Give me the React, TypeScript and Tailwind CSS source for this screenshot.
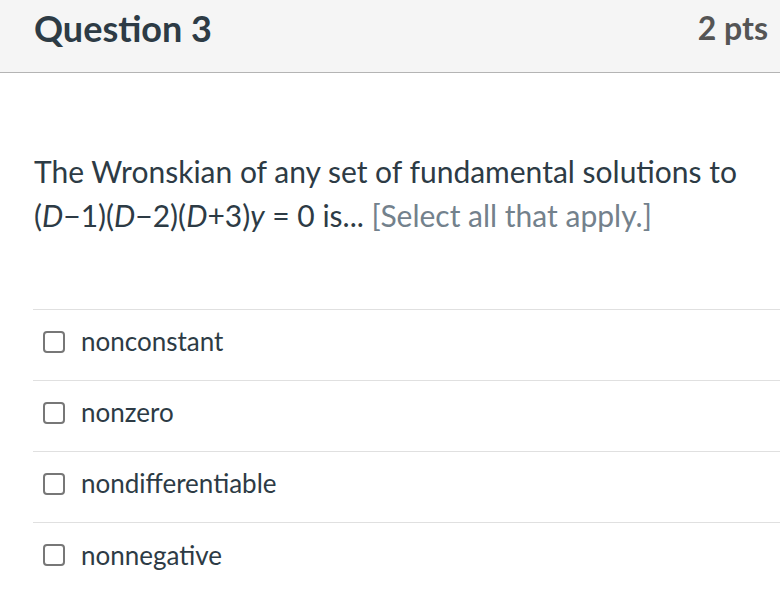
const answers = ['nonconstant', 'nonzero', 'nondifferentiable', 'nonnegative'];

export default function App() {
  return (
    <div className="w-[780px] h-[605px] overflow-hidden bg-white font-['Lato',sans-serif] text-[#2d3b45]">
      <div className="h-[73px] bg-[#f5f5f5] border-b border-[#b4b4b4] flex items-start justify-between pl-[34px] pr-[12px] pt-[8px]">
        <h2 className="text-[36px] font-bold leading-[40px]">Question 3</h2>
        <span className="text-[32px] font-bold leading-[40px] text-[#555555]">2 pts</span>
      </div>

      <div className="pl-[34px] pt-[76px]">
        <p className="text-[30px] leading-[44px]">
          The Wronskian of any set of fundamental solutions to
          <br />
          (<i>D</i>−1)(<i>D</i>−2)(<i>D</i>+3)<i>y</i> = 0 is... <span className="text-[#73818c]">[Select all that apply.]</span>
        </p>
      </div>

      <div className="ml-[33px] mt-[72px] border-t border-[#e0e0e0]">
        {answers.map((a, i) => (
          <label
            key={a}
            className={`h-[71px] flex items-center gap-[16px] pl-[10px] pb-[7px] ${i < answers.length - 1 ? 'border-b border-[#e0e0e0]' : ''}`}
          >
            <span className="w-[22px] h-[22px] rounded-[4px] border-2 border-[#777777] bg-white shrink-0" />
            <span className="text-[26px]">{a}</span>
          </label>
        ))}
      </div>
    </div>
  );
}
